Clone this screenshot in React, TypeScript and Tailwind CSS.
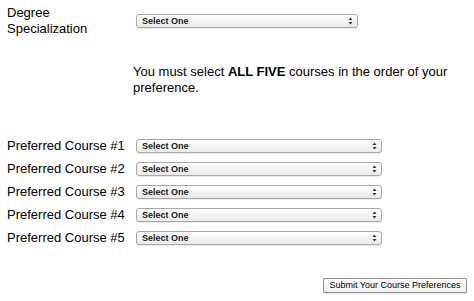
import React from "react";

function Arrows() {
  return (
    <svg width="5" height="8" viewBox="0 0 5 8" className="shrink-0">
      <path d="M2.5 0.5 L4.5 3 L0.5 3 Z" fill="#333" />
      <path d="M2.5 7.5 L4.5 5 L0.5 5 Z" fill="#333" />
    </svg>
  );
}

function FakeSelect({ width }: { width: string }) {
  return (
    <div
      className={`${width} ml-[3px] h-[14px] flex items-center justify-between pl-[5px] pr-[4px] rounded-[3px] border border-[#a8a8a8] bg-gradient-to-b from-white to-[#e9e9e9] shadow-[0_1px_0_rgba(0,0,0,0.08)]`}
    >
      <span className="text-[9px] font-bold leading-none text-[#1a1a1a]">Select One</span>
      <Arrows />
    </div>
  );
}

export default function App() {
  const courses = [1, 2, 3, 4, 5];
  return (
    <div
      className="w-[474px] h-[301px] bg-white text-black pt-[5px] pl-[7px] pr-[7px] overflow-hidden"
      style={{ fontFamily: '"Liberation Sans", Arial, Helvetica, sans-serif' }}
    >
      <div className="flex items-center h-[32px]">
        <div className="w-[126px] text-[13px] leading-[16px]">
          Degree
          <br />
          Specialization
        </div>
        <FakeSelect width="w-[222px]" />
      </div>

      <p className="mt-[27px] ml-[126px] text-[13px] leading-[16px]">
        You must select <b>ALL FIVE</b> courses in the order of your preference.
      </p>

      <div className="mt-[42px] flex flex-col gap-[7px]">
        {courses.map((n) => (
          <div key={n} className="flex items-center h-[16px]">
            <div className="w-[126px] text-[13px] leading-[16px] whitespace-nowrap">
              Preferred Course #{n}
            </div>
            <FakeSelect width="w-[246px]" />
          </div>
        ))}
      </div>

      <div className="mt-[32px] flex justify-end">
        <button className="w-[144px] h-[15px] flex items-center justify-center border border-[#8f8f8f] bg-gradient-to-b from-white to-[#f0f0f0] rounded-[1px] text-[9px] leading-none text-black shadow-[0_1px_0_rgba(0,0,0,0.1)]">
          Submit Your Course Preferences
        </button>
      </div>
    </div>
  );
}
